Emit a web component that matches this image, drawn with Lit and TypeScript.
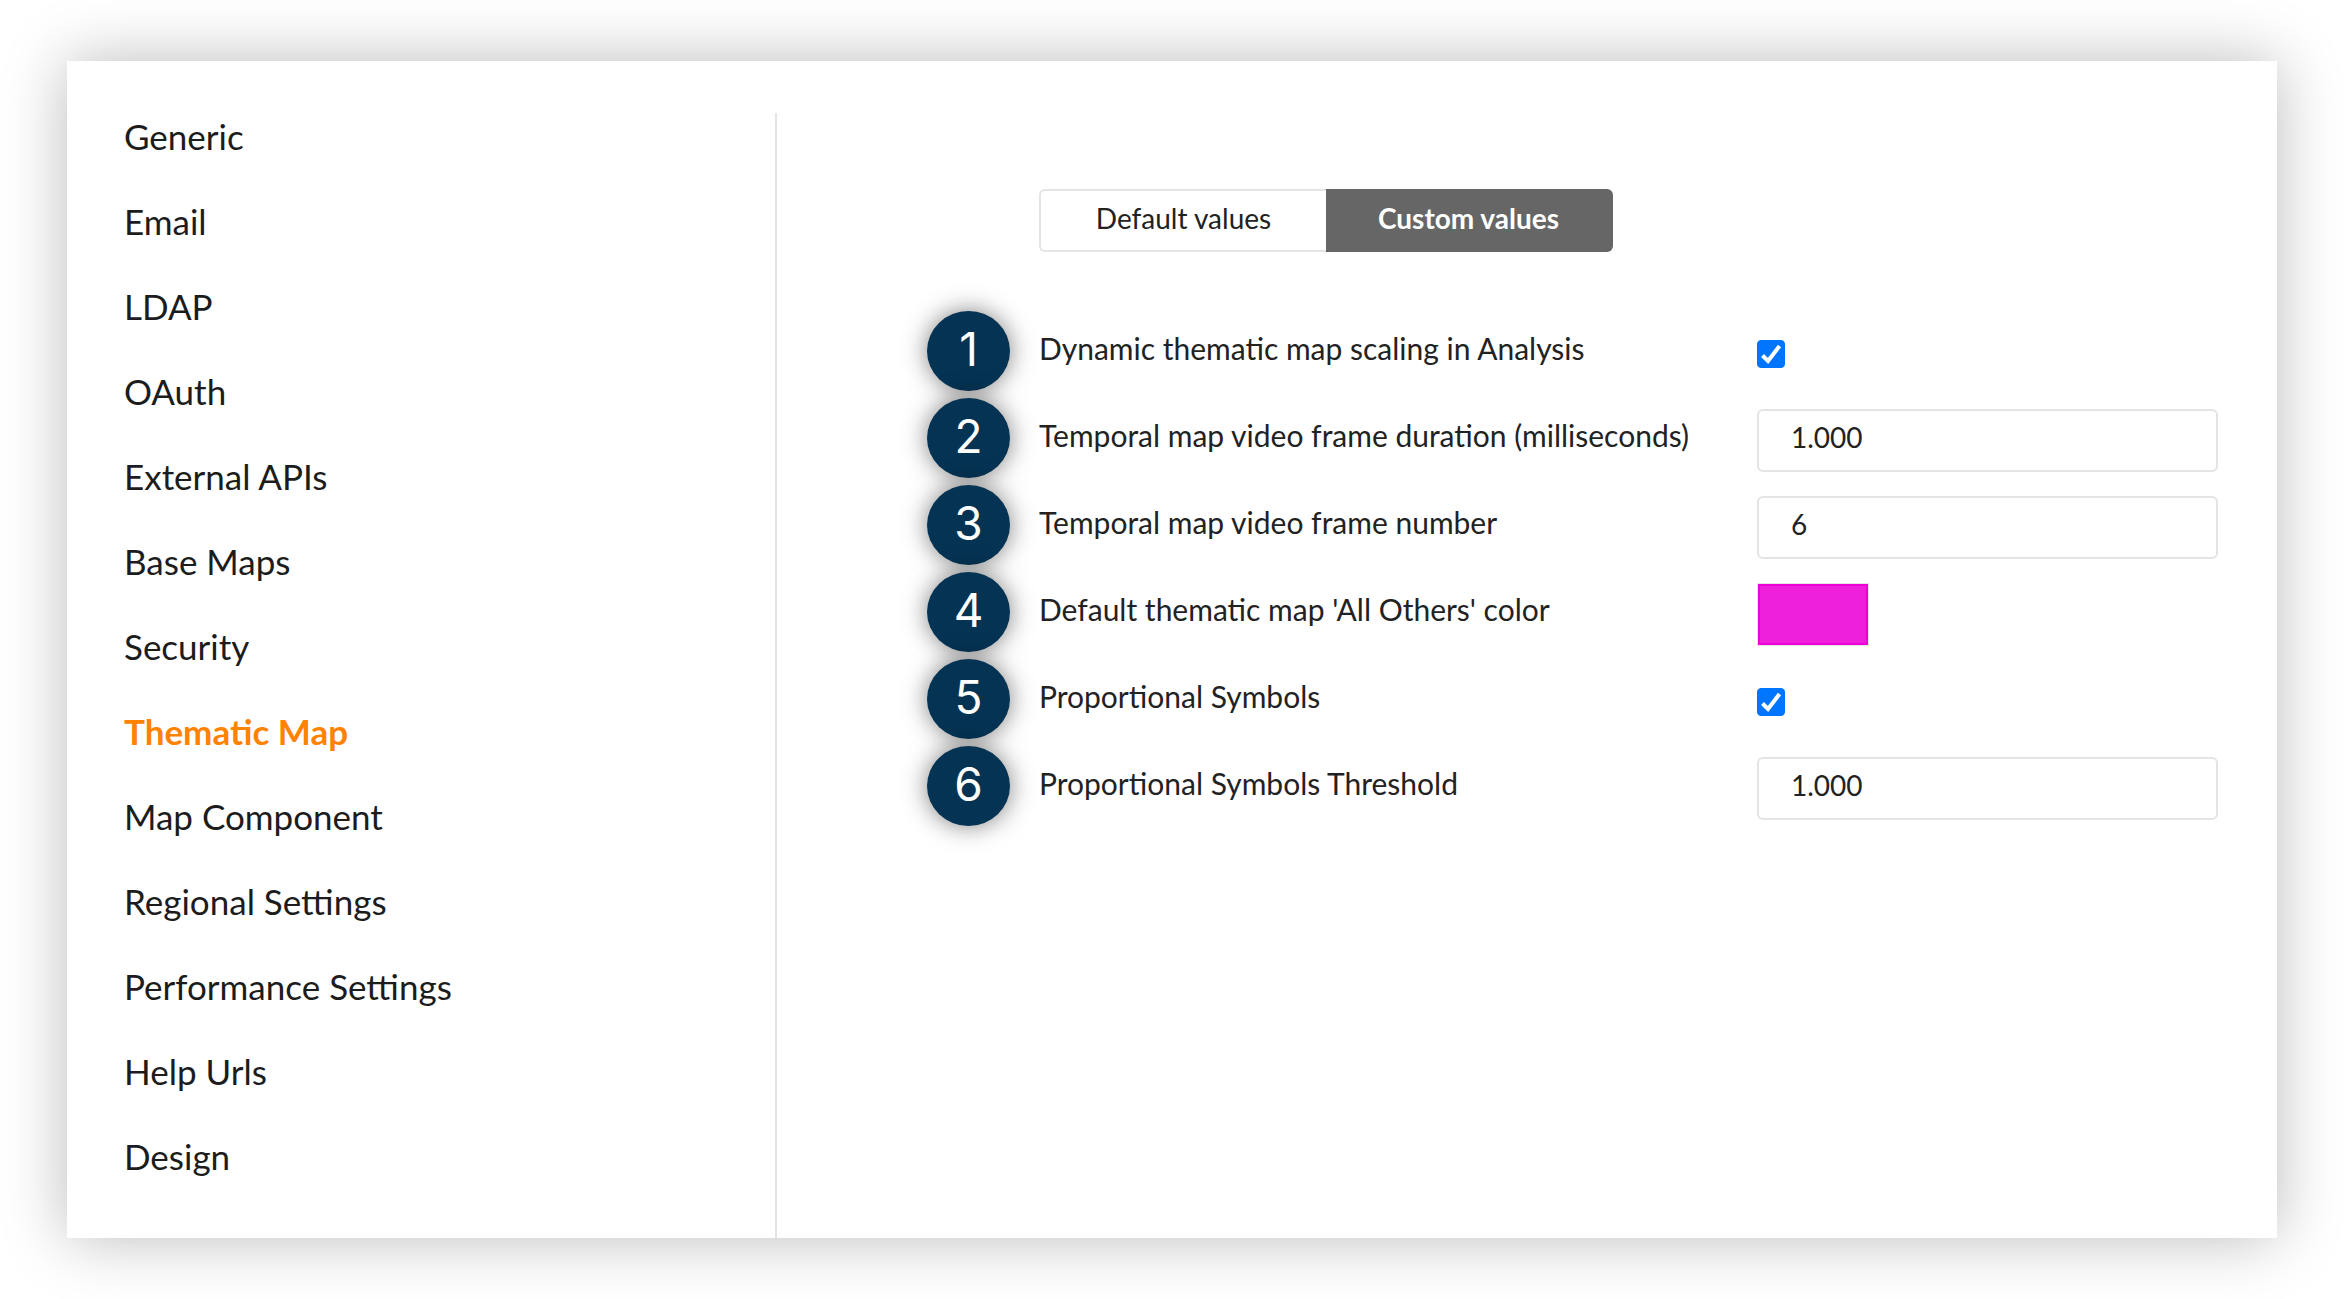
import { LitElement, html, css } from "lit";
import { customElement, state } from "lit/decorators.js";
import { classMap } from "lit/directives/class-map.js";

type Setting = {
  id: string;
  label: string;
  kind: "check" | "text" | "color";
  value?: string;
};

const SECTIONS = [
  "Generic",
  "Email",
  "LDAP",
  "OAuth",
  "External APIs",
  "Base Maps",
  "Security",
  "Thematic Map",
  "Map Component",
  "Regional Settings",
  "Performance Settings",
  "Help Urls",
  "Design",
];

const SETTINGS: Setting[] = [
  { id: "dynamic-scaling", label: "Dynamic thematic map scaling in Analysis", kind: "check" },
  { id: "frame-duration", label: "Temporal map video frame duration (milliseconds)", kind: "text", value: "1.000" },
  { id: "frame-number", label: "Temporal map video frame number", kind: "text", value: "6" },
  { id: "others-color", label: "Default thematic map 'All Others' color", kind: "color", value: "#ee1fdb" },
  { id: "symbols", label: "Proportional Symbols", kind: "check" },
  { id: "symbols-threshold", label: "Proportional Symbols Threshold", kind: "text", value: "1.000" },
];

@customElement("settings-nav")
export class SettingsNav extends LitElement {
  @state() private current = "Thematic Map";

  static styles = css`
    :host {
      display: block;
      border-right: 2px solid #e4e4e4;
    }
    .list {
      margin: 0;
      padding: 0 24px 0 57px;
      list-style: none;
    }
    .link {
      display: block;
      font-size: 35px;
      line-height: 46px;
      padding-bottom: 39px;
      color: #1c1c1c;
      text-decoration: none;
    }
    .current {
      color: #ff8200;
      font-weight: 700;
    }
  `;

  render() {
    return html`
      <nav>
        <ul class="list">
          ${SECTIONS.map(
            (name) => html`<li>
              <a
                href="#"
                class=${classMap({ link: true, current: name === this.current })}
                @click=${(e: Event) => {
                  e.preventDefault();
                  this.current = name;
                }}
                >${name}</a
              >
            </li>`
          )}
        </ul>
      </nav>
    `;
  }
}

@customElement("settings-form")
export class SettingsForm extends LitElement {
  @state() private custom = true;

  static styles = css`
    :host {
      display: block;
      padding: 76px 59px 48px 150px;
    }
    .toggle {
      display: flex;
      width: 574px;
      max-width: 100%;
      margin: 0 0 70px 112px;
    }
    .option {
      flex: 1;
      box-sizing: border-box;
      height: 63px;
      padding: 0 0 5px;
      border: 2px solid #e4e4e4;
      background: #fff;
      color: #222;
      font: inherit;
      font-size: 28px;
      line-height: 36px;
    }
    .option:first-child {
      border-right: 0;
      border-radius: 6px 0 0 6px;
    }
    .option:last-child {
      border-left: 0;
      border-radius: 0 6px 6px 0;
    }
    .option.active {
      background: #666;
      border-color: #666;
      color: #fff;
      font-weight: 700;
    }
    .rows {
      display: grid;
      gap: 24px;
    }
    .row {
      display: grid;
      grid-template-columns: 83px minmax(0, 747fr) minmax(0, 461fr);
      align-items: center;
      min-height: 63px;
    }
    .badge {
      display: flex;
      align-items: center;
      justify-content: center;
      height: 80px;
      margin: -11px 0 -6px;
      padding-bottom: 5px;
      box-sizing: border-box;
      border-radius: 50%;
      background: #053353;
      box-shadow: 0 0 24px rgba(0, 0, 0, 0.5);
      color: #fff;
      font-family: Inter, sans-serif;
      font-size: 46px;
      line-height: 1;
    }
    .label {
      padding: 0 0 12px 29px;
      font-size: 30px;
      line-height: 36px;
      color: #222;
    }
    .text {
      box-sizing: border-box;
      width: 100%;
      height: 63px;
      padding: 0 32px 7px;
      border: 2px solid #e4e4e4;
      border-radius: 6px;
      background: #fff;
      color: #222;
      font: inherit;
      font-size: 28px;
    }
    .checkcell {
      display: grid;
      width: 28px;
    }
    .check {
      grid-area: 1 / 1;
      appearance: none;
      width: 28px;
      height: 28px;
      margin: 0;
      border: 1px solid #767676;
      border-radius: 4px;
      background: #fff;
    }
    .check:checked {
      border-color: #0075ff;
      background: #0075ff;
    }
    .mark {
      grid-area: 1 / 1;
      z-index: 1;
      width: 28px;
      height: 28px;
      pointer-events: none;
    }
    .color {
      display: block;
      box-sizing: border-box;
      width: 112px;
      height: 63px;
      margin: 0;
      padding: 0;
      border: 1px solid #e4e4e4;
      background: none;
    }
    .color::-webkit-color-swatch-wrapper {
      padding: 0;
    }
    .color::-webkit-color-swatch {
      border: 2px solid #ee00d8;
      border-radius: 0;
    }
  `;

  private control(s: Setting) {
    if (s.kind === "text") {
      return html`<input class="text" type="text" id=${s.id} .value=${s.value ?? ""} />`;
    }
    if (s.kind === "color") {
      return html`<input class="color" type="color" id=${s.id} .value=${s.value ?? ""} />`;
    }
    return html`<span class="checkcell">
      <input class="check" type="checkbox" id=${s.id} checked />
      <svg class="mark" viewBox="0 0 28 28" aria-hidden="true">
        <path d="M5.500 15.500 L11 21 L22.500 6" fill="none" stroke="#fff" stroke-width="4" />
      </svg>
    </span>`;
  }

  render() {
    return html`
      <div class="toggle" role="group" aria-label="Values">
        <button
          class=${classMap({ option: true, active: !this.custom })}
          @click=${() => (this.custom = false)}
        >
          Default values
        </button>
        <button
          class=${classMap({ option: true, active: this.custom })}
          @click=${() => (this.custom = true)}
        >
          Custom values
        </button>
      </div>
      <div class="rows">
        ${SETTINGS.map(
          (s, i) => html`<div class="row">
            <span class="badge">${i + 1}</span>
            <label class="label" for=${s.id}>${s.label}</label>
            ${this.control(s)}
          </div>`
        )}
      </div>
    `;
  }
}

@customElement("app-root")
export class AppRoot extends LitElement {
  static styles = css`
    :host {
      display: flex;
      box-sizing: border-box;
      min-height: 100vh;
      padding: 61px 67px;
      background: #fff;
      font-family: Lato, "Liberation Sans", sans-serif;
    }
    .card {
      flex: 1;
      display: grid;
      grid-template-columns: minmax(0, 71fr) minmax(0, 150fr);
      padding-top: 52px;
      background: #fff;
      box-shadow: 0 0 60px rgba(0, 0, 0, 0.27);
    }
  `;

  render() {
    return html`
      <main class="card">
        <settings-nav></settings-nav>
        <settings-form></settings-form>
      </main>
    `;
  }
}
